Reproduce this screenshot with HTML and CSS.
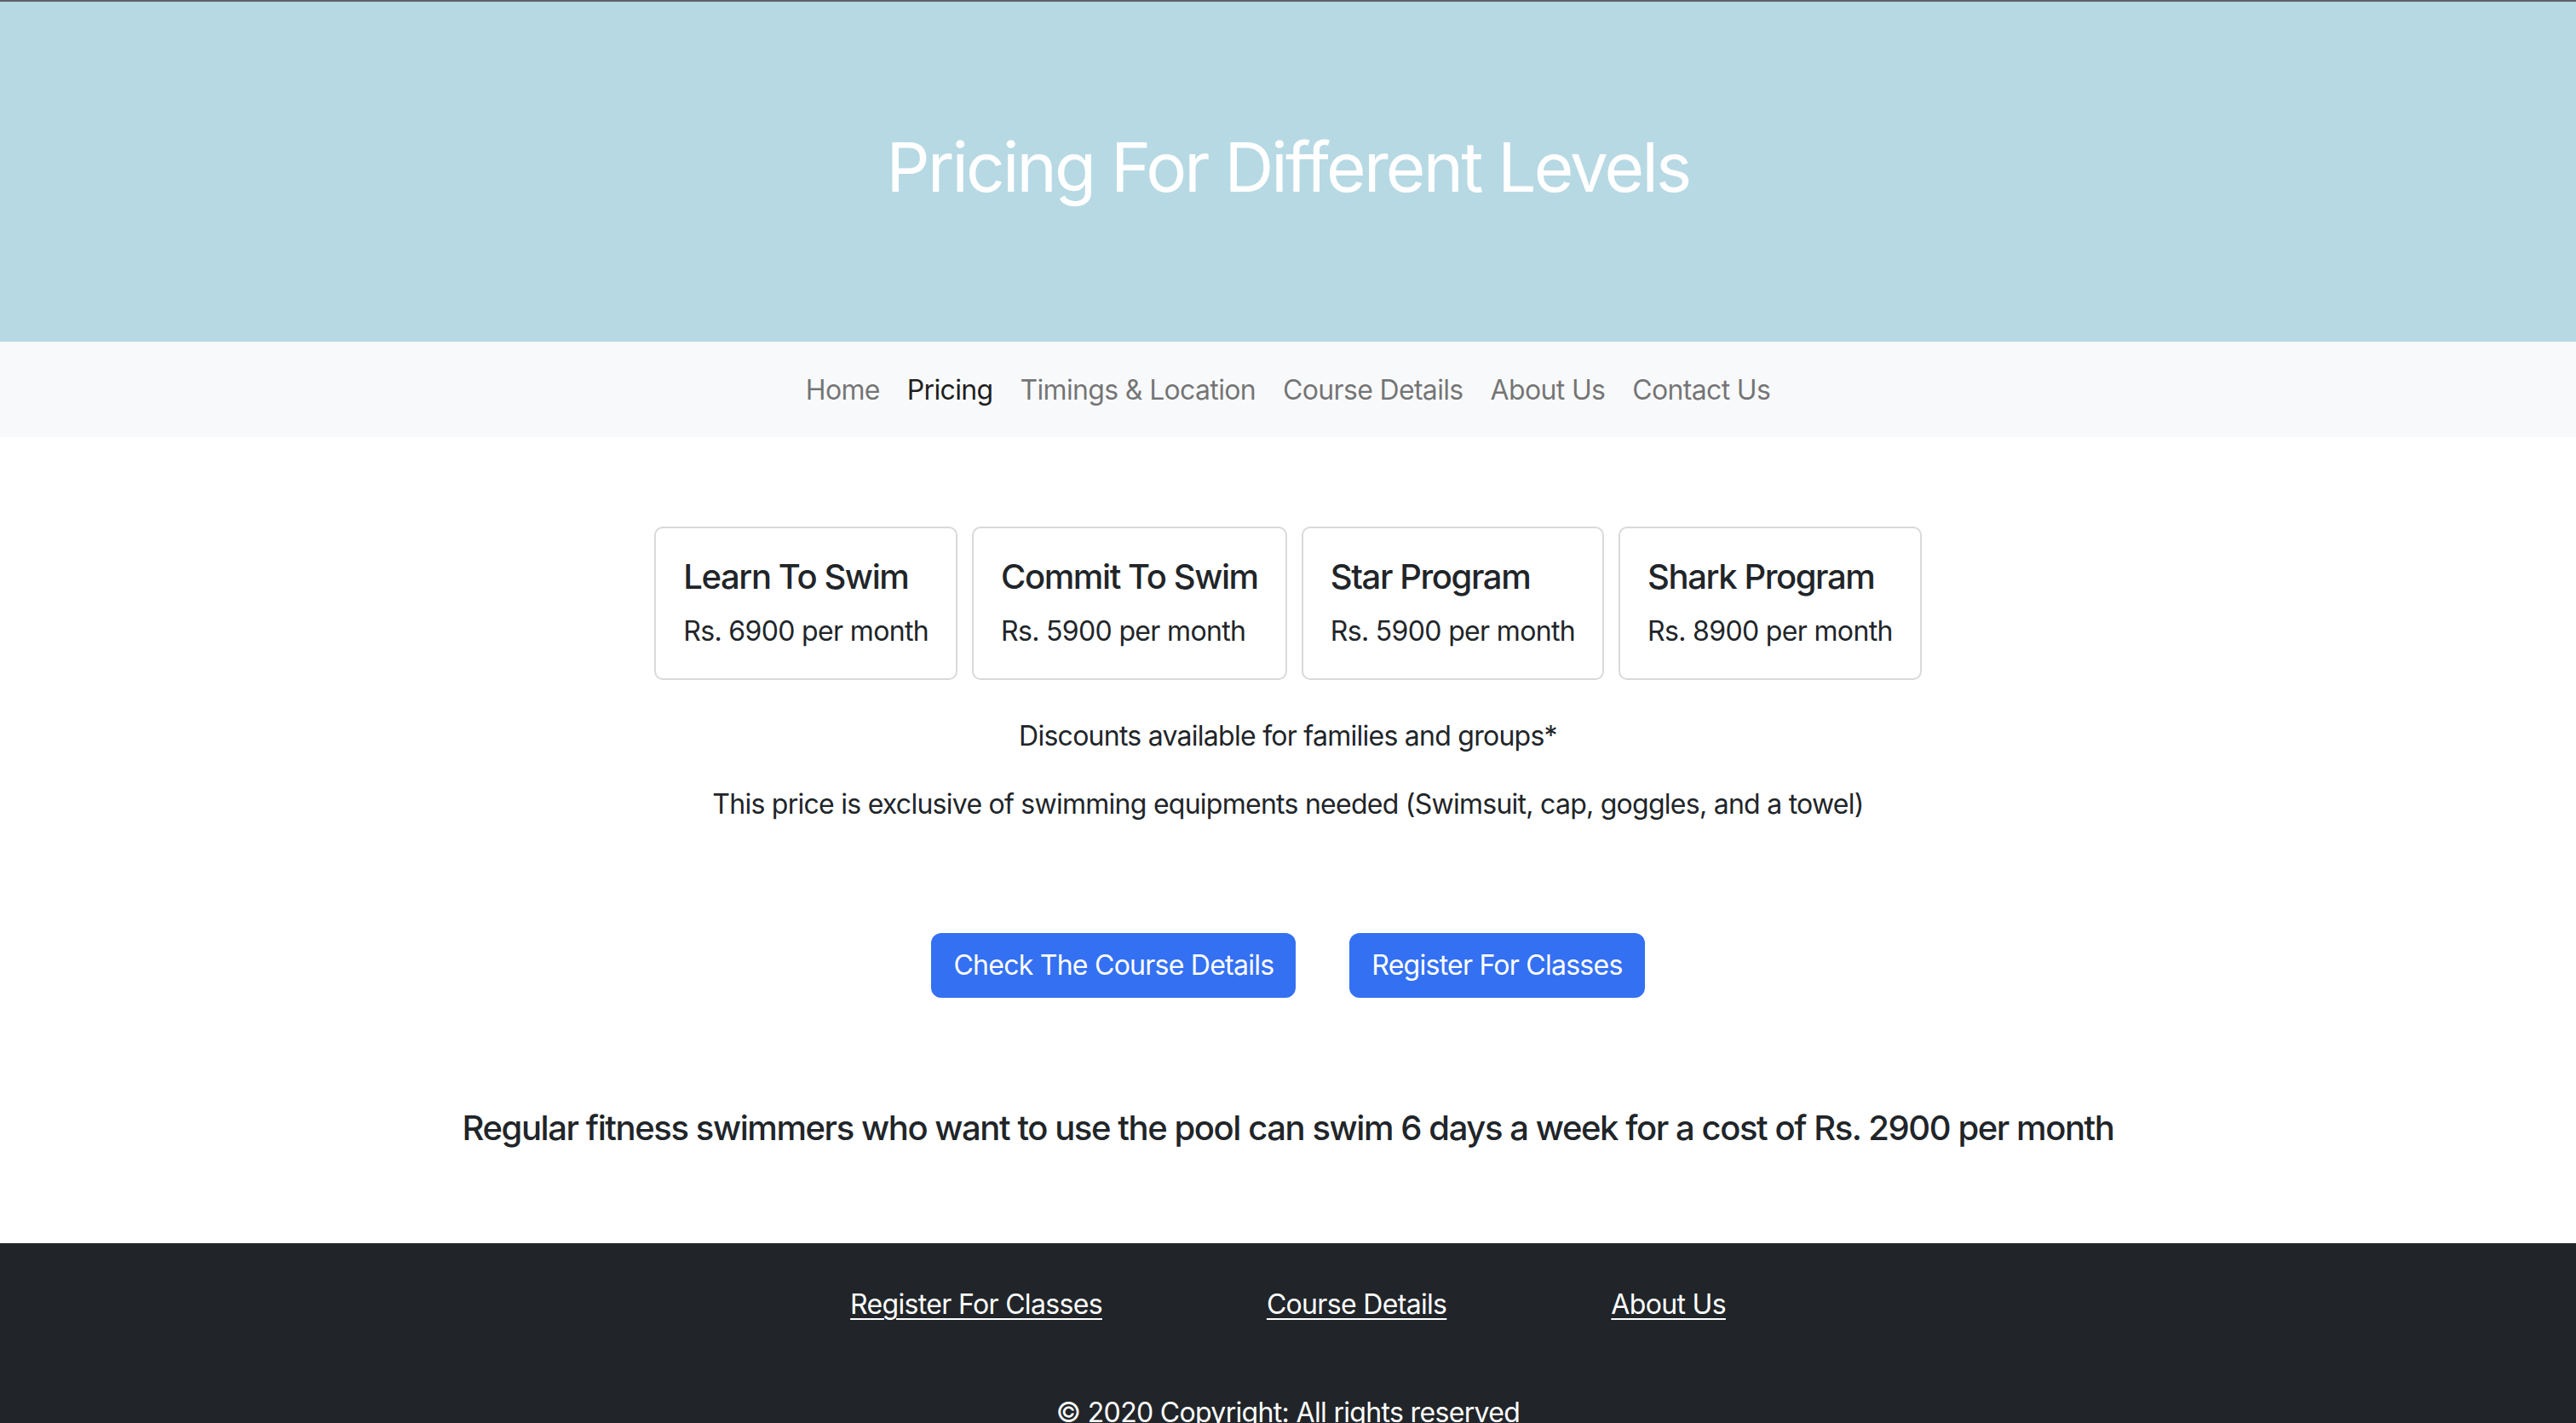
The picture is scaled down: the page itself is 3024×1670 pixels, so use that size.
FILE: index.html
```html
<!DOCTYPE html>
<html lang="en">
<head>
<meta charset="utf-8">
<title>Pricing</title>
<link rel="stylesheet" href="styles.css">
</head>
<body>
<header class="hero">
  <h1 class="hero-title">Pricing For Different Levels</h1>
</header>
<nav class="navbar">
  <a class="nav-link" href="#">Home</a>
  <a class="nav-link active" href="#">Pricing</a>
  <a class="nav-link" href="#">Timings &amp; Location</a>
  <a class="nav-link" href="#">Course Details</a>
  <a class="nav-link" href="#">About Us</a>
  <a class="nav-link" href="#">Contact Us</a>
</nav>
<main class="content">
  <div class="cards">
    <div class="card">
      <h5 class="card-title">Learn To Swim</h5>
      <p class="card-text">Rs. 6900 per month</p>
    </div>
    <div class="card">
      <h5 class="card-title">Commit To Swim</h5>
      <p class="card-text">Rs. 5900 per month</p>
    </div>
    <div class="card">
      <h5 class="card-title">Star Program</h5>
      <p class="card-text">Rs. 5900 per month</p>
    </div>
    <div class="card">
      <h5 class="card-title">Shark Program</h5>
      <p class="card-text">Rs. 8900 per month</p>
    </div>
  </div>
  <p class="note">Discounts available for families and groups*</p>
  <p class="note">This price is exclusive of swimming equipments needed (Swimsuit, cap, goggles, and a towel)</p>
  <div class="buttons">
    <a class="btn" href="#">Check The Course Details</a>
    <a class="btn" href="#">Register For Classes</a>
  </div>
  <h5 class="fitness">Regular fitness swimmers who want to use the pool can swim 6 days a week for a cost of Rs. 2900 per month</h5>
</main>
<footer class="footer">
  <div class="footer-links">
    <a href="#">Register For Classes</a>
    <a href="#">Course Details</a>
    <a href="#">About Us</a>
  </div>
  <p class="copyright">© 2020 Copyright: All rights reserved</p>
</footer>
</body>
</html>
```
FILE: styles.css
```css
* { box-sizing: border-box; }
html, body { margin: 0; padding: 0; }
body {
  font-family: Inter, "Noto Sans", "Liberation Sans", sans-serif;
  font-size: 32px;
  line-height: 48px;
  color: #212529;
  background: #ffffff;
  border-top: 2px solid #5f6268;
}
.hero {
  background: #b7d9e4;
  height: 399px;
  padding-top: 146px;
  text-align: center;
}
.hero-title {
  margin: 0;
  font-size: 80px;
  line-height: 96px;
  font-weight: 400;
  color: #ffffff;
  letter-spacing: -2.8px;
}
.navbar {
  background: #f8f9fa;
  height: 112px;
  padding: 17px 0 15px;
  display: flex;
  justify-content: center;
}
.nav-link {
  padding: 16px 16px;
  color: rgba(0, 0, 0, 0.55);
  text-decoration: none;
  line-height: 48px;
  letter-spacing: -0.66px;
}
.nav-link.active { color: rgba(0, 0, 0, 0.9); }
.content {
  padding-top: 105px;
  padding-bottom: 111px;
  text-align: center;
}
.cards {
  display: flex;
  justify-content: center;
  gap: 17px;
  margin-bottom: 42px;
}
.card {
  border: 2px solid #d9d9d9;
  border-radius: 10px;
  padding: 33px 32px 31px;
  text-align: left;
}
.card-title {
  margin: 0 0 16px;
  font-size: 40px;
  line-height: 48px;
  font-weight: 500;
  letter-spacing: -1.4px;
}
.card-text {
  margin: 0;
  letter-spacing: -0.66px;
}
.note {
  margin: 0 0 32px;
  letter-spacing: -0.74px;
}
.buttons {
  display: flex;
  justify-content: center;
  gap: 63px;
  margin-top: 127px;
}
.btn {
  display: inline-block;
  background: #3470f2;
  color: #ffffff;
  text-decoration: none;
  border: 2px solid #3470f2;
  border-radius: 12px;
  padding: 12px 24px;
  line-height: 48px;
  letter-spacing: -0.75px;
}
.fitness {
  margin: 129px 0 0;
  font-size: 40px;
  line-height: 48px;
  font-weight: 500;
  letter-spacing: -1.42px;
}
.footer {
  background: #212529;
  color: #ffffff;
  padding-top: 48px;
  padding-bottom: 40px;
  text-align: center;
}
.footer-links {
  display: flex;
  justify-content: center;
  gap: 193px;
}
.footer-links a {
  color: #ffffff;
  text-decoration: underline;
  text-underline-offset: 5px;
  text-decoration-thickness: 2px;
  letter-spacing: -0.67px;
}
.copyright {
  margin: 79px 0 0;
  letter-spacing: -0.67px;
}
```
